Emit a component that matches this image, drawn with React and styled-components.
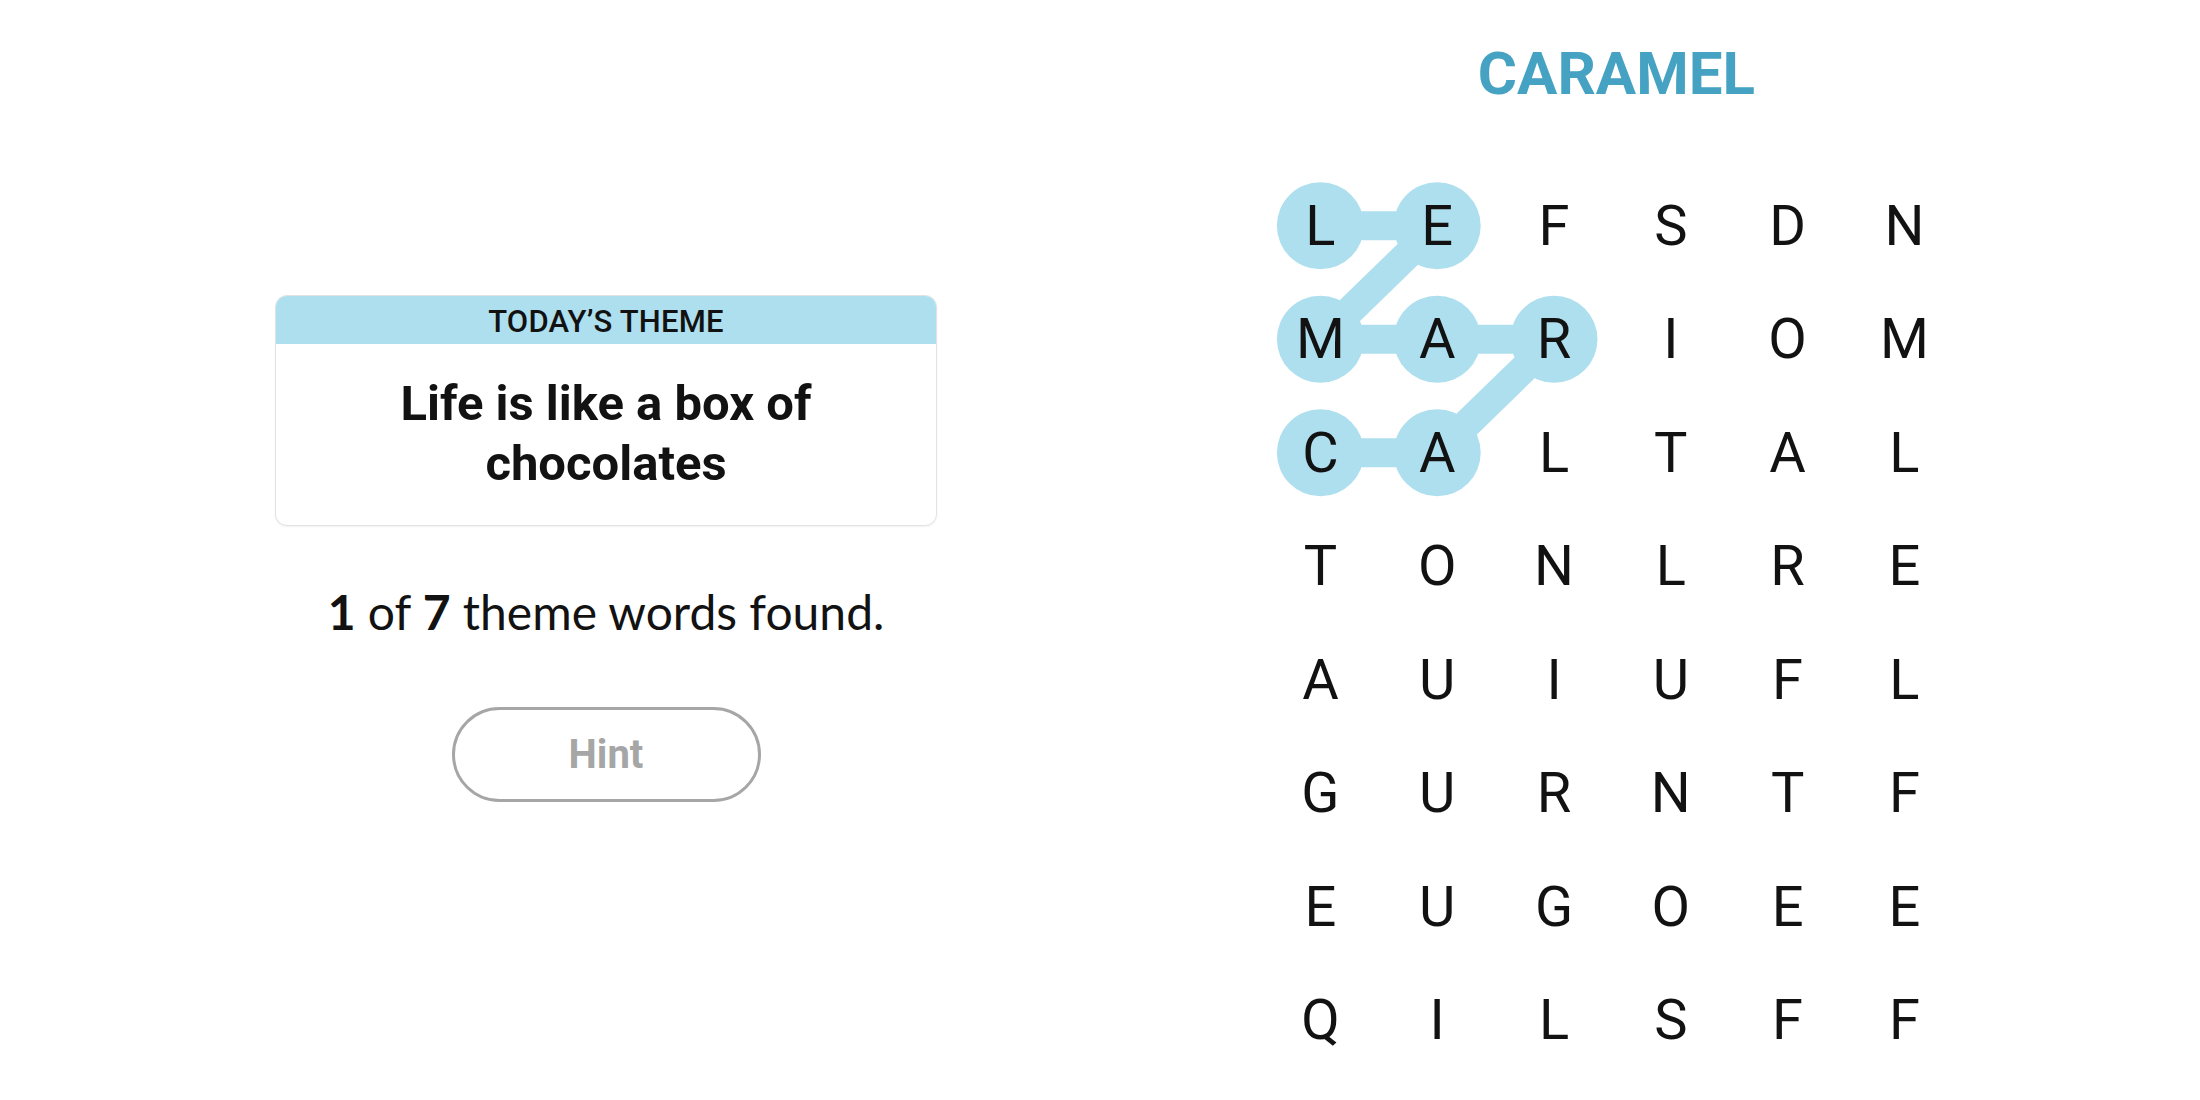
import React from "react";
import styled, { createGlobalStyle } from "styled-components";

const GlobalStyle = createGlobalStyle`
  html, body { margin: 0; padding: 0; background: #ffffff; }
  body { font-family: Roboto, "Liberation Sans", Arial, sans-serif; color: #121212; }
`;

const COL_W = 116.8;
const ROW_H = 113.5;
const HILITE = "#aedfee";

const Page = styled.div`
  width: 2200px;
  height: 1100px;
  display: flex;
  flex-direction: row;
  align-items: flex-start;
  overflow: hidden;
`;

const LeftPanel = styled.section`
  margin-left: 275px;
  width: 662px;
  padding-top: 295px;
  display: flex;
  flex-direction: column;
  align-items: center;
`;

const ThemeCard = styled.div`
  width: 100%;
  box-sizing: border-box;
  border: 1px solid #e2e2e2;
  border-radius: 12px;
  overflow: hidden;
  box-shadow: 0 1px 2px rgba(0, 0, 0, 0.06);
  background: #fff;
`;

const ThemeHeader = styled.div`
  height: 48px;
  box-sizing: border-box;
  padding-top: 3px;
  background: ${HILITE};
  display: flex;
  align-items: center;
  justify-content: center;
  font-family: Roboto, "Liberation Sans", sans-serif;
  font-weight: 500;
  font-size: 31px;
  letter-spacing: 0.2px;
  color: #121212;
`;

const ThemeBody = styled.div`
  padding: 30px 40px 31px;
  text-align: center;
  font-family: Roboto, "Liberation Sans", sans-serif;
  font-weight: 700;
  font-size: 49px;
  line-height: 60px;
  color: #121212;
`;

const Count = styled.p`
  margin: 57px 0 0;
  font-family: Lato, "Liberation Sans", sans-serif;
  font-size: 48px;
  line-height: 1.2;
  color: #121212;
  b { font-weight: 700; }
`;

const HintButton = styled.button`
  margin-top: 66px;
  width: 309px;
  height: 95px;
  box-sizing: border-box;
  border: 3px solid #a6a6a6;
  border-radius: 48px;
  background: #fff;
  color: #a6a6a6;
  font-family: Roboto, "Liberation Sans", sans-serif;
  font-weight: 700;
  font-size: 40px;
  cursor: default;
`;

const RightPanel = styled.section`
  margin-left: 325px;
  width: ${COL_W * 6}px;
  padding-top: 44px;
  display: flex;
  flex-direction: column;
  align-items: center;
`;

const Title = styled.h1`
  margin: 0 0 65px 8px;
  font-family: Roboto, "Liberation Sans", sans-serif;
  font-weight: 700;
  font-size: 60px;
  line-height: 60px;
  color: #45a2c2;
`;

const Board = styled.div`
  position: relative;
  display: grid;
  grid-template-columns: repeat(6, ${COL_W}px);
  grid-auto-rows: ${ROW_H}px;
`;

const Trail = styled.svg`
  position: absolute;
  left: 0;
  top: 0;
  width: 100%;
  height: 100%;
  pointer-events: none;
`;

const Cell = styled.div`
  position: relative;
  display: flex;
  align-items: center;
  justify-content: center;
  font-family: Roboto, "Liberation Sans", sans-serif;
  font-weight: 400;
  font-size: 56px;
  line-height: 1;
  color: #121212;
`;

const LETTERS = [
  "LEFSDN",
  "MARIOM",
  "CALTAL",
  "TONLRE",
  "AUIUFL",
  "GURNTF",
  "EUGOEE",
  "QILSFF",
];

// path of the found word CARAMEL: [row, col]
const PATH = [
  [2, 0],
  [2, 1],
  [1, 2],
  [1, 1],
  [1, 0],
  [0, 1],
  [0, 0],
];

const cx = (c) => COL_W / 2 + c * COL_W;
const cy = (r) => ROW_H / 2 + r * ROW_H;

export default function App() {
  return (
    <>
      <GlobalStyle />
      <Page>
        <LeftPanel>
          <ThemeCard>
            <ThemeHeader>TODAY’S THEME</ThemeHeader>
            <ThemeBody>
              Life is like a box of
              <br />
              chocolates
            </ThemeBody>
          </ThemeCard>
          <Count>
            <b>1</b> of <b>7</b> theme words found.
          </Count>
          <HintButton>Hint</HintButton>
        </LeftPanel>
        <RightPanel>
          <Title>CARAMEL</Title>
          <Board>
            <Trail viewBox={`0 0 ${COL_W * 6} ${ROW_H * 8}`}>
              {PATH.slice(1).map(([r, c], i) => {
                const [pr, pc] = PATH[i];
                return (
                  <line
                    key={i}
                    x1={cx(pc)}
                    y1={cy(pr)}
                    x2={cx(c)}
                    y2={cy(r)}
                    stroke={HILITE}
                    strokeWidth="29"
                  />
                );
              })}
              {PATH.map(([r, c], i) => (
                <circle key={i} cx={cx(c)} cy={cy(r)} r="43.5" fill={HILITE} />
              ))}
            </Trail>
            {LETTERS.map((row, r) =>
              row.split("").map((ch, c) => <Cell key={`${r}-${c}`}>{ch}</Cell>)
            )}
          </Board>
        </RightPanel>
      </Page>
    </>
  );
}
